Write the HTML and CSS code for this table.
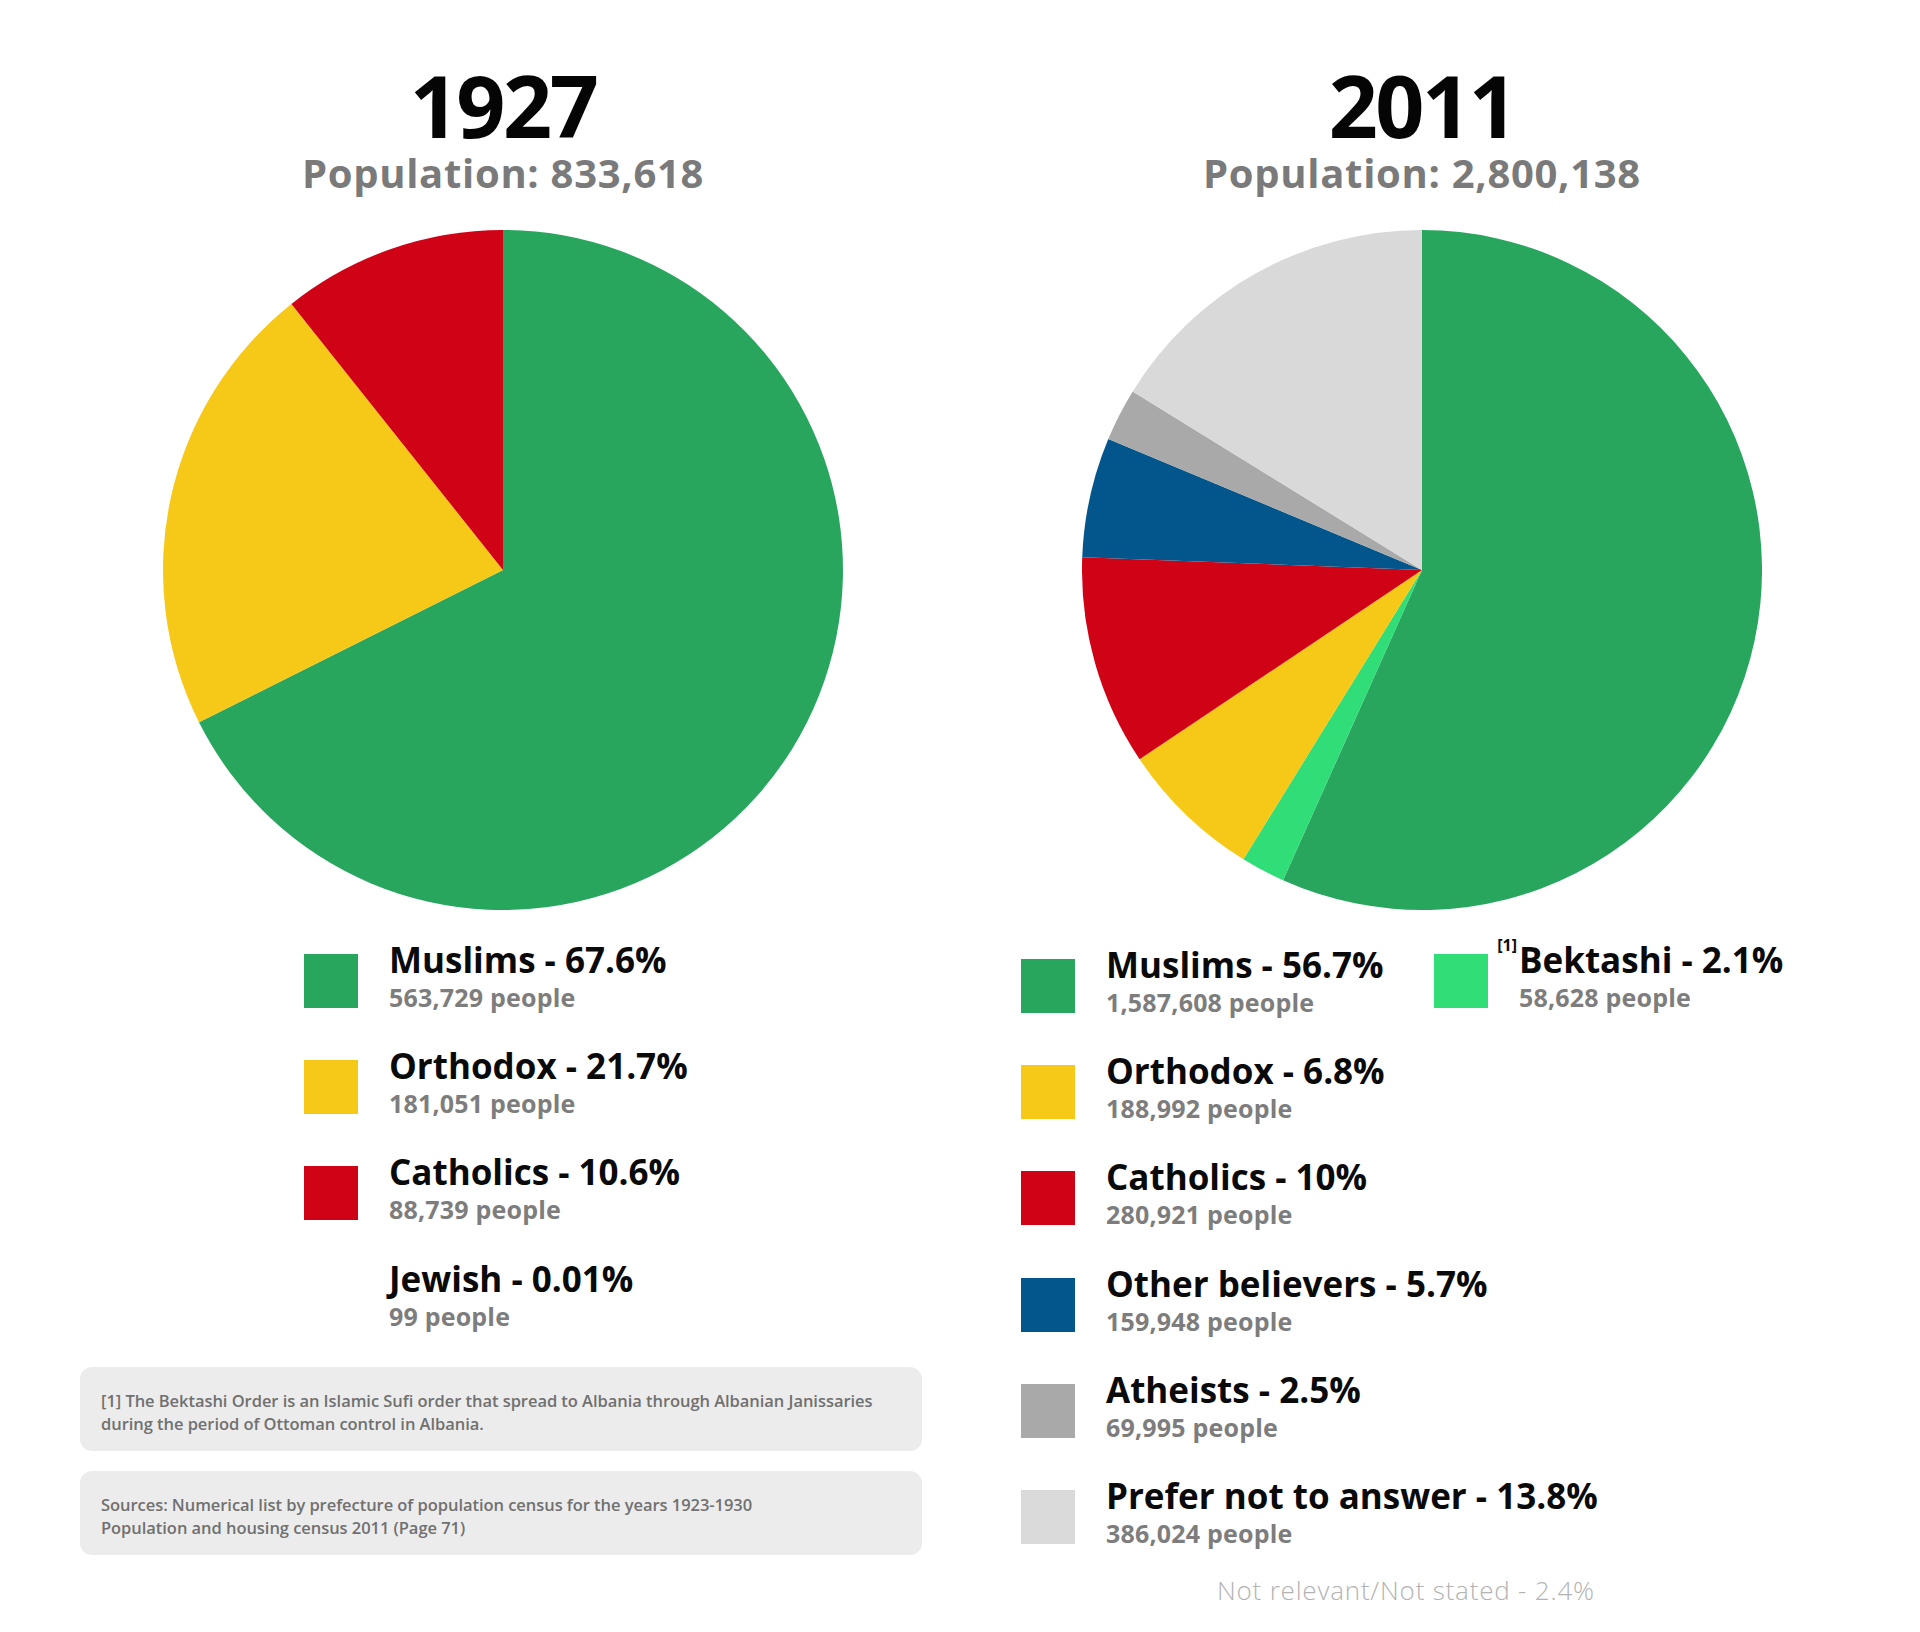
FILE: index.html
```html
<!DOCTYPE html>
<html lang="en">
<head>
<meta charset="utf-8">
<title>Religion in Albania: 1927 vs 2011</title>
<link rel="stylesheet" href="styles.css">
</head>
<body>
<div class="page">
  <section class="col col-left">
    <h1 class="year">1927</h1>
    <div class="pop">Population: 833,618</div>
    <svg class="pie" viewBox="0 0 680 680" width="680" height="680">
      <path class="c-muslim" d="M340,340 L340,0 A340,340 0 1 1 36.0,492.3 Z"/>
      <path class="c-orthodox" d="M340,340 L36.0,492.3 A340,340 0 0 1 128.4,73.9 Z"/>
      <path class="c-catholic" d="M340,340 L128.4,73.9 A340,340 0 0 1 340,0 Z"/>
    </svg>
    <div class="legend legend-left">
      <div class="row">
        <span class="sq c-muslim-bg"></span>
        <div class="txt"><div class="t">Muslims - 67.6%</div><div class="p">563,729 people</div></div>
      </div>
      <div class="row">
        <span class="sq c-orthodox-bg"></span>
        <div class="txt"><div class="t">Orthodox - 21.7%</div><div class="p">181,051 people</div></div>
      </div>
      <div class="row">
        <span class="sq c-catholic-bg"></span>
        <div class="txt"><div class="t">Catholics - 10.6%</div><div class="p">88,739 people</div></div>
      </div>
      <div class="row">
        <span class="sq"></span>
        <div class="txt"><div class="t">Jewish - 0.01%</div><div class="p">99 people</div></div>
      </div>
    </div>
    <div class="note note-first">[1] The Bektashi Order is an Islamic Sufi order that spread to Albania through Albanian Janissaries<br>during the period of Ottoman control in Albania.</div>
    <div class="note">Sources: Numerical list by prefecture of population census for the years 1923-1930<br>Population and housing census 2011 (Page 71)</div>
  </section>

  <section class="col col-right">
    <h1 class="year">2011</h1>
    <div class="pop">Population: 2,800,138</div>
    <svg class="pie" viewBox="0 0 680 680" width="680" height="680">
      <path class="c-muslim" d="M340,340 L340,0 A340,340 0 1 1 201.04,650.3 Z"/>
      <path class="c-bektashi" d="M340,340 L201.04,650.3 A340,340 0 0 1 161.4,629.3 Z"/>
      <path class="c-orthodox" d="M340,340 L161.4,629.3 A340,340 0 0 1 57.6,529.3 Z"/>
      <path class="c-catholic" d="M340,340 L57.6,529.3 A340,340 0 0 1 0.24,327.2 Z"/>
      <path class="c-other" d="M340,340 L0.24,327.2 A340,340 0 0 1 26.3,208.9 Z"/>
      <path class="c-atheist" d="M340,340 L26.3,208.9 A340,340 0 0 1 50.7,161.4 Z"/>
      <path class="c-prefer" d="M340,340 L50.7,161.4 A340,340 0 0 1 340,0 Z"/>
    </svg>
    <div class="legend legend-right">
      <div class="row-pair">
        <div class="row row-main">
          <span class="sq c-muslim-bg"></span>
          <div class="txt"><div class="t">Muslims - 56.7%</div><div class="p">1,587,608 people</div></div>
        </div>
        <div class="row row-side">
          <span class="sq c-bektashi-bg"></span>
          <div class="txt txt-side"><div class="t"><sup class="ref">[1]</sup>Bektashi - 2.1%</div><div class="p">58,628 people</div></div>
        </div>
      </div>
      <div class="row">
        <span class="sq c-orthodox-bg"></span>
        <div class="txt"><div class="t">Orthodox - 6.8%</div><div class="p">188,992 people</div></div>
      </div>
      <div class="row">
        <span class="sq c-catholic-bg"></span>
        <div class="txt"><div class="t">Catholics - 10%</div><div class="p">280,921 people</div></div>
      </div>
      <div class="row">
        <span class="sq c-other-bg"></span>
        <div class="txt"><div class="t">Other believers - 5.7%</div><div class="p">159,948 people</div></div>
      </div>
      <div class="row">
        <span class="sq c-atheist-bg"></span>
        <div class="txt"><div class="t">Atheists - 2.5%</div><div class="p">69,995 people</div></div>
      </div>
      <div class="row">
        <span class="sq c-prefer-bg"></span>
        <div class="txt"><div class="t">Prefer not to answer - 13.8%</div><div class="p">386,024 people</div></div>
      </div>
    </div>
    <div class="not-stated">Not relevant/Not stated - 2.4%</div>
  </section>
</div>
</body>
</html>
```

FILE: styles.css
```css
* { box-sizing: border-box; }
html, body { margin: 0; padding: 0; background: #ffffff; }
body {
  width: 1920px;
  height: 1632px;
  overflow: hidden;
  font-family: "Open Sans", "Noto Sans", "Liberation Sans", sans-serif;
  color: #0a0a0a;
}
.page {
  display: grid;
  grid-template-columns: 1006px 914px;
}
.col { padding-top: 62px; }
.col-right { padding-right: 82px; }

.year {
  margin: 0;
  text-align: center;
  font-size: 86px;
  line-height: 86px;
  font-weight: 700;
  color: #050505;
  letter-spacing: -2.5px;
}
.pop {
  margin-top: 4.5px;
  text-align: center;
  font-size: 40px;
  line-height: 40px;
  font-weight: 700;
  color: #7a7a7a;
  letter-spacing: 0.7px;
}
.pie {
  display: block;
  margin: 37.5px auto 0;
  width: 680px;
  height: 680px;
}
.c-muslim { fill: #28a65e; }
.c-orthodox { fill: #f6c818; }
.c-catholic { fill: #d00216; }
.c-bektashi { fill: #30dd77; }
.c-other { fill: #03568b; }
.c-atheist { fill: #a9a9a9; }
.c-prefer { fill: #d9d9d9; }
.c-muslim-bg { background: #28a65e; }
.c-orthodox-bg { background: #f6c818; }
.c-catholic-bg { background: #d00216; }
.c-bektashi-bg { background: #30dd77; }
.c-other-bg { background: #03568b; }
.c-atheist-bg { background: #a9a9a9; }
.c-prefer-bg { background: #dadada; }

.legend {
  display: flex;
  flex-direction: column;
  gap: 30.7px;
}
.legend-left { margin-top: 30px; padding-left: 304px; }
.legend-right { margin-top: 35px; padding-left: 15px; }
.row {
  display: flex;
  align-items: flex-start;
  gap: 31px;
}
.sq {
  flex: 0 0 54px;
  width: 54px;
  height: 54px;
  margin-top: 14px;
}
.txt { white-space: nowrap; }
.t {
  position: relative;
  font-size: 35px;
  line-height: 40px;
  font-weight: 700;
  color: #0a0a0a;
}
.p {
  font-size: 25px;
  line-height: 35.5px;
  font-weight: 700;
  color: #7d7d7d;
  letter-spacing: 0.2px;
}
.row-pair { display: flex; align-items: flex-start; }
.row-main { flex: 0 0 413px; }
.row-side { margin-top: -5px; }
.ref {
  position: absolute;
  right: calc(100% + 2px);
  top: -4px;
  font-size: 16px;
  line-height: 18px;
  font-weight: 700;
  vertical-align: baseline;
}

.note {
  margin: 20px 0 0 80px;
  width: 842px;
  height: 84px;
  padding: 22px 21px 0;
  border-radius: 12px;
  background: #ececec;
  font-size: 16.5px;
  line-height: 23px;
  font-weight: 600;
  color: #707070;
  letter-spacing: -0.05px;
  white-space: nowrap;
}
.note-first { margin-top: 32.5px; }

.not-stated {
  margin: 23.6px 0 0 211px;
  font-size: 26px;
  line-height: 30px;
  font-weight: 300;
  color: #b3b3b3;
  letter-spacing: 0.8px;
}
```
